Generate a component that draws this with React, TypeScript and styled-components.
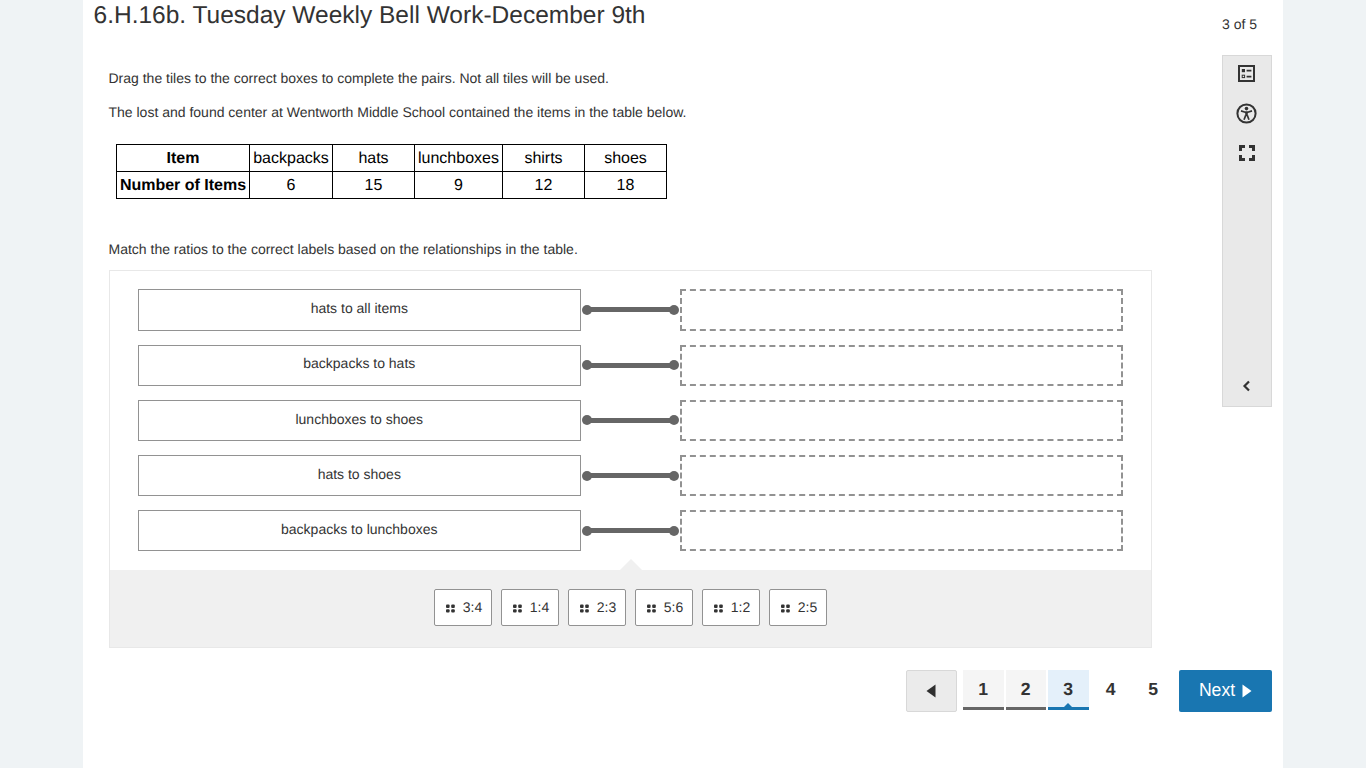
import styled, { createGlobalStyle } from "styled-components";

const pairs = ["hats to all items", "backpacks to hats", "lunchboxes to shoes", "hats to shoes", "backpacks to lunchboxes"];
const ratios = ["3:4", "1:4", "2:3", "5:6", "1:2", "2:5"];
const columns = [
	{ name: "backpacks", count: 6, width: 83 },
	{ name: "hats", count: 15, width: 82 },
	{ name: "lunchboxes", count: 9, width: 88 },
	{ name: "shirts", count: 12, width: 82 },
	{ name: "shoes", count: 18, width: 82 },
];
const pages = [
	{ n: 1, state: "done" },
	{ n: 2, state: "done" },
	{ n: 3, state: "current" },
	{ n: 4, state: "todo" },
	{ n: 5, state: "todo" },
];

export default function App() {
	return (
		<>
			<GlobalStyle />
			<Page>
				<Header>
					<Title>6.H.16b. Tuesday Weekly Bell Work-December 9th</Title>
					<Counter>3 of 5</Counter>
				</Header>

				<Body>
					<Content>
						<Instruction>Drag the tiles to the correct boxes to complete the pairs. Not all tiles will be used.</Instruction>
						<Instruction>The lost and found center at Wentworth Middle School contained the items in the table below.</Instruction>

						<DataTable>
							<tbody>
								<tr>
									<HeadCell style={{ width: 133 }}>Item</HeadCell>
									{columns.map((c) => (
										<Cell key={c.name} style={{ width: c.width }}>
											{c.name}
										</Cell>
									))}
								</tr>
								<tr>
									<HeadCell>Number of Items</HeadCell>
									{columns.map((c) => (
										<Cell key={c.name}>{c.count}</Cell>
									))}
								</tr>
							</tbody>
						</DataTable>

						<MatchPrompt>Match the ratios to the correct labels based on the relationships in the table.</MatchPrompt>

						<MatchPanel>
							<PairList>
								{pairs.map((p) => (
									<PairRow key={p}>
										<Label>{p}</Label>
										<Connector />
										<DropBox />
									</PairRow>
								))}
							</PairList>
							<Tray>
								{ratios.map((r) => (
									<Tile key={r}>
										<Grip viewBox="0 0 9 9" aria-hidden="true">
											<rect x="0" y="0.5" width="3.6" height="3.4" rx="1" />
											<rect x="5.2" y="0.5" width="3.6" height="3.4" rx="1" />
											<rect x="0" y="5.2" width="3.6" height="3.4" rx="1" />
											<rect x="5.2" y="5.2" width="3.6" height="3.4" rx="1" />
										</Grip>
										{r}
									</Tile>
								))}
							</Tray>
						</MatchPanel>

						<Footer>
							<PrevButton aria-label="Previous">
								<svg width="10" height="14" viewBox="0 0 10 14">
									<path d="M9.5 0.5v13L0.5 7z" fill="#2f2f2f" />
								</svg>
							</PrevButton>
							<PageList>
								{pages.map((p) => (
									<PageButton key={p.n} $state={p.state}>
										{p.n}
									</PageButton>
								))}
							</PageList>
							<NextButton>
								Next
								<svg width="10" height="14" viewBox="0 0 10 14">
									<path d="M0.5 0.5v13L9.5 7z" fill="#fff" />
								</svg>
							</NextButton>
						</Footer>
					</Content>

					<ToolRail>
						<ToolStack>
							<svg width="17" height="17" viewBox="0 0 17 17" fill="none">
								<rect x="1" y="1" width="15" height="15" stroke="#333" strokeWidth="2" />
								<rect x="3.8" y="4" width="3.2" height="3.2" fill="#333" />
								<path d="M8.6 5.6h4.8M8.6 11.6h4.8" stroke="#333" strokeWidth="1.6" />
								<rect x="4.2" y="10.2" width="2.4" height="2.4" stroke="#333" />
							</svg>
							<svg width="21" height="21" viewBox="0 0 21 21" fill="none">
								<circle cx="10.5" cy="10.5" r="9.1" stroke="#333" strokeWidth="2" />
								<circle cx="10.5" cy="5.6" r="1.8" fill="#333" />
								<path d="M5 7.9l4.2 1.3h2.6L16 7.9" stroke="#333" strokeWidth="1.7" />
								<path d="M9.2 9.2h2.6v3.8H9.2z" fill="#333" />
								<path d="M9.7 12.4L8 16.8M11.3 12.4l1.7 4.4" stroke="#333" strokeWidth="1.7" />
							</svg>
							<svg width="16" height="16" viewBox="0 0 16 16" fill="none">
								<path d="M1.5 6V1.5H6M10 1.5h4.5V6M14.5 10v4.5H10M6 14.5H1.5V10" stroke="#333" strokeWidth="3" />
							</svg>
						</ToolStack>
						<svg width="9" height="12" viewBox="0 0 9 12" fill="none">
							<path d="M7 1.5L2.5 6 7 10.5" stroke="#333" strokeWidth="2.2" />
						</svg>
					</ToolRail>
				</Body>
			</Page>
		</>
	);
}

const GlobalStyle = createGlobalStyle`
	html, body {
		margin: 0;
		height: 768px;
		overflow: hidden;
		background: #eff3f5;
		font-family: "Liberation Sans", Arial, sans-serif;
		color: #333;
		text-rendering: geometricPrecision;
	}
`;

const Page = styled.div`
	width: 1200px;
	height: 768px;
	margin: 0 auto;
	background: #fff;
	overflow: hidden;
	box-sizing: border-box;
	padding: 0 11px 0 0;
`;

const Header = styled.header`
	display: flex;
	justify-content: space-between;
	height: 55px;
`;

const Title = styled.h1`
	margin: 2px 0 0 10.5px;
	font-size: 24.5px;
	line-height: 28px;
	font-weight: 400;
`;

const Counter = styled.div`
	margin: 16px 15px 0 0;
	font-size: 14px;
	line-height: 17px;
`;

const Body = styled.div`
	display: flex;
	justify-content: space-between;
	align-items: flex-start;
`;

const Content = styled.main`
	width: 1069px;
	padding-left: 26px;
	flex: none;
`;

const Instruction = styled.p`
	margin: 15px 0 0 -0.5px;
	height: 17px;
	font-size: 14px;
	line-height: 17px;

	& + & {
		margin-top: 17px;
	}
`;

const DataTable = styled.table`
	margin: 23px 0 0 7px;
	border-collapse: collapse;
	table-layout: fixed;
	width: 551px;
	color: #000;
	font-size: 16px;
`;

const HeadCell = styled.td`
	border: 1px solid #000;
	height: 27px;
	padding: 1px 2px 0;
	text-align: center;
	font-weight: 700;
	white-space: nowrap;
	box-sizing: border-box;
`;

const Cell = styled.td`
	border: 1px solid #000;
	height: 27px;
	padding: 1px 2px 0;
	text-align: center;
	white-space: nowrap;
	box-sizing: border-box;
`;

const MatchPrompt = styled.p`
	margin: 42px 0 0 -0.5px;
	height: 17px;
	font-size: 14px;
	line-height: 17px;
`;

const MatchPanel = styled.section`
	margin-top: 12px;
	width: 1043px;
	height: 378px;
	box-sizing: border-box;
	border: 1px solid #e8e8e8;
	display: flex;
	flex-direction: column;
`;

const PairList = styled.div`
	flex: 1;
	display: flex;
	flex-direction: column;
	gap: 14px;
	padding: 18.4px 28px 0;
`;

const PairRow = styled.div`
	display: flex;
	align-items: stretch;
	height: 41.2px;
`;

const Label = styled.div`
	width: 443px;
	box-sizing: border-box;
	border: 1px solid #929292;
	display: flex;
	align-items: center;
	justify-content: center;
	padding-bottom: 3.6px;
	font-size: 14px;
`;

const Connector = styled.div`
	position: relative;
	width: 100px;

	&::before {
		content: "";
		position: absolute;
		left: 6px;
		right: 7px;
		top: 50%;
		height: 5px;
		margin-top: -2.5px;
		background: #666;
	}

	&::after {
		content: "";
		position: absolute;
		left: 1px;
		top: 50%;
		width: 10px;
		height: 10px;
		margin-top: -5px;
		border-radius: 50%;
		background: #666;
		box-shadow: 87px 0 0 #666;
	}
`;

const DropBox = styled.div`
	width: 443px;
	box-sizing: border-box;
	border: 2px dashed #929292;
`;

const Tray = styled.div`
	position: relative;
	height: 77px;
	background: #f0f0f0;
	display: flex;
	justify-content: center;
	gap: 9px;
	padding: 19px 0 0;
	box-sizing: border-box;

	&::before {
		content: "";
		position: absolute;
		left: 50%;
		top: -11px;
		margin-left: -11px;
		border: 11px solid transparent;
		border-top: 0;
		border-bottom: 11px solid #f0f0f0;
	}
`;

const Tile = styled.div`
	width: 58px;
	height: 37px;
	box-sizing: border-box;
	background: #fff;
	border: 1px solid #929292;
	border-radius: 2px;
	display: flex;
	align-items: center;
	justify-content: center;
	gap: 8px;
	padding: 0 0 1px 2px;
	font-size: 14px;
`;

const Grip = styled.svg`
	width: 9px;
	height: 9px;
	margin-top: 2px;
	fill: #333;
`;

const Footer = styled.nav`
	display: flex;
	justify-content: flex-end;
	margin: 22px -94px 0 0;
`;

const PrevButton = styled.button`
	width: 51px;
	height: 42px;
	box-sizing: border-box;
	background: #ebebeb;
	border: 1px solid #d8d8d8;
	border-radius: 2px;
	display: flex;
	align-items: center;
	justify-content: center;
	padding: 0 2px 1px 0;
`;

const PageList = styled.div`
	display: flex;
	gap: 2px;
	margin: 0 5.5px 0 6px;
	align-self: flex-start;
`;

const PageButton = styled.div<{ $state: string }>`
	position: relative;
	width: 40.5px;
	height: 37px;
	display: flex;
	align-items: center;
	justify-content: center;
	font-size: 17.6px;
	line-height: 40px;
	font-weight: 700;
	background: ${(p) => (p.$state === "done" ? "#f5f5f5" : p.$state === "current" ? "#e4f0fa" : "#fff")};
	border-bottom: ${(p) => (p.$state === "done" ? "3px solid #666" : p.$state === "current" ? "3px solid #1976b1" : "3px solid transparent")};

	&::after {
		content: ${(p) => (p.$state === "current" ? '""' : "none")};
		position: absolute;
		left: 50%;
		bottom: 0;
		margin-left: -4px;
		border: 4px solid transparent;
		border-top: 0;
		border-bottom: 4px solid #1976b1;
	}
`;

const NextButton = styled.button`
	width: 93px;
	height: 42px;
	background: #1976b1;
	border: 0;
	border-radius: 2px;
	color: #fff;
	font-family: inherit;
	font-size: 17.6px;
	display: flex;
	align-items: center;
	justify-content: center;
	gap: 7px;
	padding: 0 0 1px;
`;

const ToolRail = styled.aside`
	position: relative;
	flex: none;
	width: 50px;
	height: 352px;
	box-sizing: border-box;
	background: #e9e9e9;
	border: 1px solid #d8d8d8;
	display: flex;
	flex-direction: column;
	align-items: center;
	justify-content: space-between;
	padding: 9px 1px 14px 0;
`;

const ToolStack = styled.div`
	display: flex;
	flex-direction: column;
	align-items: center;
	gap: 21px;
`;
